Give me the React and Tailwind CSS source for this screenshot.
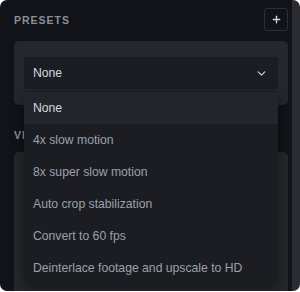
import React from 'react';
import { ChevronDown, Plus } from 'lucide-react';

const presets = [
  'None',
  '4x slow motion',
  '8x super slow motion',
  'Auto crop stabilization',
  'Convert to 60 fps',
  'Deinterlace footage and upscale to HD',
];

const App = () => {
  return (
    <div className="w-[300px] h-[292px] bg-white flex overflow-hidden font-['Liberation_Sans',Arial,sans-serif]">
      {/* Main panel */}
      <div className="relative w-[292px] h-[291px] bg-[#111318] rounded-l-[7px] overflow-hidden pl-[14px] pr-[4px]">
        {/* Header */}
        <div className="flex items-start justify-between h-[41px] pt-[8px]">
          <span className="mt-[6px] text-[10.5px] leading-[12px] font-bold tracking-[1px] text-[#8a8f9a] uppercase">Presets</span>
          <button className="w-[24px] h-[23px] flex items-center justify-center border border-[#2c2e34] rounded-[3px] text-[#d4d6da]">
            <Plus size={11} strokeWidth={3} />
          </button>
        </div>

        {/* Preset card */}
        <div className="bg-[#25272c] rounded-[5px] px-[10px] py-[16px]">
          <div className="h-[32px] bg-[#1b1d23] rounded-[3px] flex items-center justify-between pl-[9px] pr-[10px]">
            <span className="text-[12.2px] text-[#d6d9df]">None</span>
            <ChevronDown size={13} strokeWidth={2.5} className="text-[#c4c7cd]" />
          </div>
        </div>

        {/* Video section behind dropdown */}
        <div className="h-[47px] flex items-center pt-[14px]">
          <span className="text-[10.5px] font-bold tracking-[1px] text-[#8a8f9a] uppercase">Video</span>
        </div>
        <div className="bg-[#25272c] rounded-[5px] h-[160px]"></div>

        {/* Dropdown menu */}
        <div className="absolute left-[24px] top-[91px] w-[254px] bg-[#1b1d23] rounded-[3px] pt-[1px] shadow-[0_4px_12px_rgba(0,0,0,0.4)]">
          {presets.map((p, i) => (
            <div
              key={p}
              className={
                i === 0
                  ? 'h-[32px] flex items-center pl-[9px] bg-[#22252b] text-[12.2px] text-[#d6d9df]'
                  : 'h-[32px] flex items-center pl-[9px] text-[12.2px] text-[#9ba0aa]'
              }
            >
              {p}
            </div>
          ))}
        </div>
      </div>

      {/* Scrollbar strip */}
      <div className="w-[8px] h-[291px] bg-[#2b2c31] rounded-r-[7px]"></div>
    </div>
  );
};

export default App;
